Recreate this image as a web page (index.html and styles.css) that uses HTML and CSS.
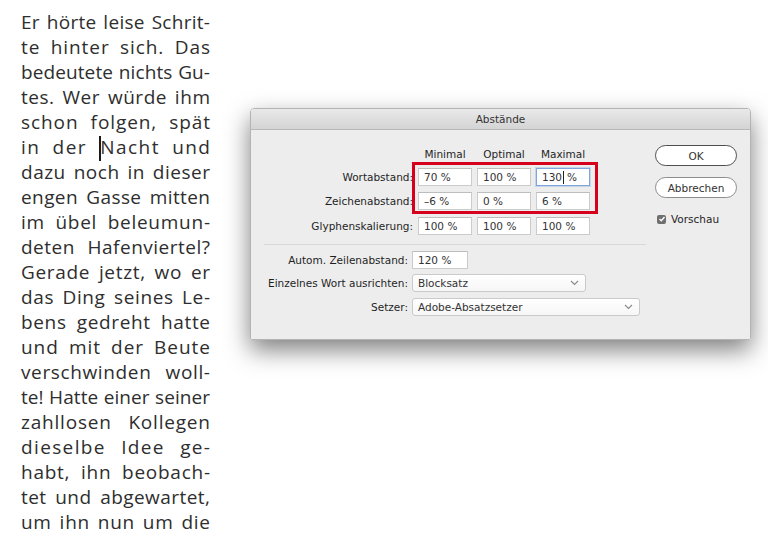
FILE: index.html
```html
<!DOCTYPE html>
<html lang="de">
<head>
    <meta charset="UTF-8">
    <meta name="viewport" content="width=device-width, initial-scale=1.0">
    <title>Abstände</title>
    <link rel="stylesheet" href="styles.css">
</head>
<body>
<main class="page">

    <article class="story">
        <p class="line">Er hörte leise Schrit-</p>
        <p class="line">te hinter sich. Das</p>
        <p class="line">bedeutete nichts Gu-</p>
        <p class="line">tes. Wer würde ihm</p>
        <p class="line">schon folgen, spät</p>
        <p class="line">in der <span class="caret"></span>Nacht und</p>
        <p class="line">dazu noch in dieser</p>
        <p class="line">engen Gasse mitten</p>
        <p class="line">im übel beleumun-</p>
        <p class="line">deten Hafenviertel?</p>
        <p class="line">Gerade jetzt, wo er</p>
        <p class="line">das Ding seines Le-</p>
        <p class="line">bens gedreht hatte</p>
        <p class="line">und mit der Beute</p>
        <p class="line">verschwinden woll-</p>
        <p class="line">te! Hatte einer seiner</p>
        <p class="line">zahllosen Kollegen</p>
        <p class="line">dieselbe Idee ge-</p>
        <p class="line">habt, ihn beobach-</p>
        <p class="line">tet und abgewartet,</p>
        <p class="line">um ihn nun um die</p>
    </article>

    <div class="dialog">
        <div class="titlebar">Abstände</div>
        <div class="dialog-body">
            <div class="form">
                <div class="spacing">
                    <span></span>
                    <span class="colhead">Minimal</span>
                    <span class="colhead">Optimal</span>
                    <span class="colhead">Maximal</span>

                    <span class="label">Wortabstand:</span>
                    <span class="field">70 %</span>
                    <span class="field">100 %</span>
                    <span class="field focus">130<span class="caret-sm"></span>%</span>

                    <span class="label">Zeichenabstand:</span>
                    <span class="field">–6 %</span>
                    <span class="field">0 %</span>
                    <span class="field">6 %</span>

                    <span class="label">Glyphenskalierung:</span>
                    <span class="field">100 %</span>
                    <span class="field">100 %</span>
                    <span class="field">100 %</span>
                </div>

                <div class="sep"></div>

                <div class="setup">
                    <span class="label">Autom. Zeilenabstand:</span>
                    <span class="field field-short">120 %</span>

                    <span class="label">Einzelnes Wort ausrichten:</span>
                    <span class="select select-mid">Blocksatz
                        <svg class="chevron" width="9" height="6" viewBox="0 0 9 6"><polyline points="1,1 4.5,4.5 8,1" fill="none" stroke="#8c8c8c" stroke-width="1.2"/></svg>
                    </span>

                    <span class="label">Setzer:</span>
                    <span class="select select-wide">Adobe-Absatzsetzer
                        <svg class="chevron" width="9" height="6" viewBox="0 0 9 6"><polyline points="1,1 4.5,4.5 8,1" fill="none" stroke="#8c8c8c" stroke-width="1.2"/></svg>
                    </span>
                </div>
            </div>

            <div class="side">
                <button class="btn btn-default">OK</button>
                <button class="btn">Abbrechen</button>
                <div class="check">
                    <span class="box">
                        <svg width="8" height="8" viewBox="0 0 8 8"><polyline points="1.5,4 3.3,5.8 6.5,2" fill="none" stroke="#fff" stroke-width="1.4"/></svg>
                    </span>
                    Vorschau
                </div>
            </div>

            <div class="highlight"></div>
        </div>
    </div>

</main>

<script>
    // Blocksatz wie im Layoutprogramm: Restraum teils auf Buchstaben, teils auf Wortabstände
    document.querySelectorAll(".line").forEach(function (line) {
        line.classList.add("measure");
        var range = document.createRange();
        range.selectNodeContents(line);
        var natural = range.getBoundingClientRect().width;
        line.classList.remove("measure");

        var gaps = line.textContent.length - 1;
        var slack = line.clientWidth - natural;
        var ls = Math.max(-0.4, Math.min(1.5, slack * 0.55 / gaps));

        line.style.letterSpacing = ls.toFixed(2) + "px";
        line.style.marginRight = (-ls).toFixed(2) + "px";
    });
</script>
</body>
</html>
```

FILE: styles.css
```css
body{
    margin: 0;
    background: #fff;
}

.page{
    display: flex;
    align-items: flex-start;
}

/* Satzspalte links */
.story{
    width: 189px;
    padding: 10px 0 0 21px;
    font-family: "Open Sans", sans-serif;
    font-weight: 400;
    font-size: 19px;
    color: #2e2e2e;
}

.line{
    margin: 0;
    height: 25px;
    line-height: 25px;
    text-align: justify;
    text-align-last: justify;
    white-space: nowrap;
}

.line.measure{
    text-align: left;
    text-align-last: left;
}

.caret{
    display: inline-block;
    width: 2px;
    height: 25px;
    margin-right: -1px;
    vertical-align: -7px;
    background: #1a1a1a;
}

/* Dialog */
.dialog{
    width: 499px;
    margin: 108px 0 0 40px;
    border: 1px solid #b4b4b4;
    border-radius: 4px 4px 2px 2px;
    box-shadow: 0 10px 24px rgba(0, 0, 0, 0.5);
    font-family: "DejaVu Sans", sans-serif;
    font-size: 10.5px;
    color: #1f1f1f;
    overflow: hidden;
}

.titlebar{
    height: 20px;
    line-height: 20px;
    text-align: center;
    color: #333;
    background: linear-gradient(#e9e9e9, #d4d4d4);
    border-bottom: 1px solid #b9b9b9;
}

.dialog-body{
    position: relative;
    display: flex;
    height: 209px;
    background: #ededed;
}

.form{
    width: 400px;
}

.spacing{
    display: grid;
    grid-template-columns: 162px 54px 54px 54px;
    grid-template-rows: 14px 18px 18px 18px;
    column-gap: 5px;
    row-gap: 6.5px;
    margin-top: 17px;
}

.colhead{
    text-align: center;
    line-height: 14px;
}

.label{
    text-align: right;
    line-height: 18px;
    white-space: nowrap;
}

.field{
    box-sizing: border-box;
    height: 18px;
    line-height: 16px;
    padding-left: 5px;
    background: #fff;
    border: 1px solid #cbcbcb;
    border-top-color: #bdbdbd;
    color: #333;
}

.field.focus{
    border-color: #7ea6dd;
    box-shadow: 0 0 0 1px rgba(126, 166, 221, 0.35);
}

.caret-sm{
    display: inline-block;
    width: 1px;
    height: 13px;
    margin: 0 3px 0 1px;
    vertical-align: -3px;
    background: #222;
}

.sep{
    height: 1px;
    width: 382px;
    margin: 9px 0 0 13px;
    background: #d8d8d8;
}

.setup{
    display: grid;
    grid-template-columns: 157px auto;
    grid-auto-rows: 18px;
    column-gap: 4px;
    row-gap: 5.5px;
    justify-items: start;
    margin-top: 6px;
}

.setup .label{
    justify-self: end;
}

.field-short{
    width: 56px;
}

.select{
    box-sizing: border-box;
    display: flex;
    align-items: center;
    justify-content: space-between;
    height: 18px;
    padding: 0 6px 0 5px;
    background: linear-gradient(#fff, #f6f6f6);
    border: 1px solid #cacaca;
    border-radius: 3px;
    color: #333;
}

.select-mid{
    width: 174px;
}

.select-wide{
    width: 228px;
}

.side{
    display: flex;
    flex-direction: column;
    align-items: flex-start;
    padding: 15px 0 0 4px;
}

.btn{
    box-sizing: border-box;
    width: 82px;
    height: 21px;
    margin-bottom: 11px;
    padding: 0;
    background: #fff;
    border: 1px solid #8d8d8d;
    border-radius: 11px;
    font-family: "DejaVu Sans", sans-serif;
    font-size: 10.5px;
    color: #333;
}

.btn-default{
    border: 1.5px solid #4f4f4f;
}

.check{
    display: flex;
    align-items: center;
    gap: 5px;
    margin: 4px 0 0 2px;
}

.box{
    display: flex;
    align-items: center;
    justify-content: center;
    width: 9px;
    height: 9px;
    border-radius: 2px;
    background: #6f6f6f;
}

/* rote Markierung */
.highlight{
    position: absolute;
    left: 161px;
    top: 32px;
    width: 186px;
    height: 52px;
    box-sizing: border-box;
    border: 3px solid #d6001c;
}
```
